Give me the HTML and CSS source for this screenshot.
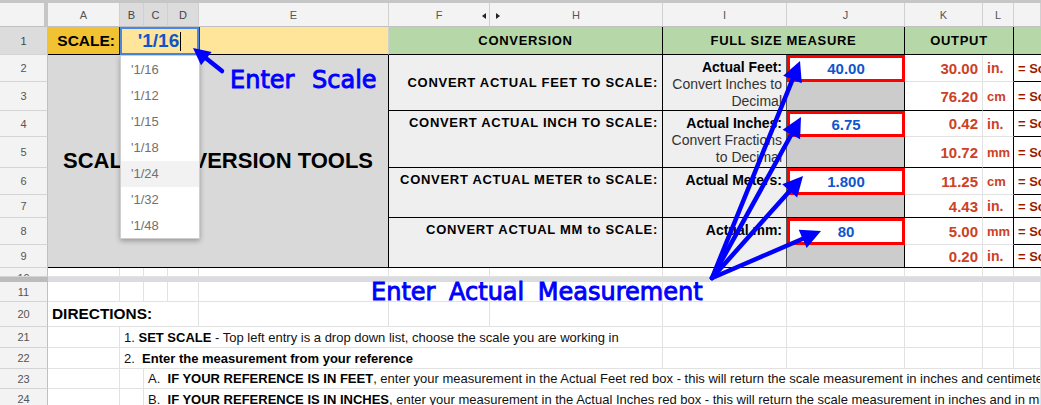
FILE: index.html
```html
<!DOCTYPE html>
<html>
<head>
<meta charset="utf-8">
<title>Scale Conversion Tools</title>
<link rel="stylesheet" href="styles.css">
</head>
<body>
<div class="page">
  <div class="topstrip"></div>
  <div class="grid frozen">
    <div class="corner"></div>
    <div class="ch">A</div>
    <div class="ch sel">B</div>
    <div class="ch sel">C</div>
    <div class="ch sel">D</div>
    <div class="ch">E</div>
    <div class="ch ch-f">F</div>
    <div class="ch ch-h">H</div>
    <div class="ch">I</div>
    <div class="ch">J</div>
    <div class="ch">K</div>
    <div class="ch">L</div>
    <div class="ch"></div>

    <div class="rh sel">1</div>
    <div class="a1">SCALE:</div>
    <div class="b1"><span>'1/16</span><span class="caret"></span></div>
    <div class="e1"></div>
    <div class="hd span2">CONVERSION</div>
    <div class="hd span2">FULL SIZE MEASURE</div>
    <div class="hd span2">OUTPUT</div>
    <div class="hd m1"></div>

    <div class="rh">2</div>
    <div class="title">SCALE CONVERSION TOOLS</div>
    <div class="conv">CONVERT ACTUAL FEET TO SCALE:</div>
    <div class="lbl"><b>Actual Feet:</b><span>Convert Inches to</span><span>Decimal</span></div>
    <div class="inp">40.00</div>
    <div class="out">30.00</div>
    <div class="unit">in.</div>
    <div class="eq">= Scale</div>

    <div class="rh">3</div>
    <div class="gray"></div>
    <div class="out grp">76.20</div>
    <div class="unit grp sm">cm</div>
    <div class="eq">= Scale</div>

    <div class="rh">4</div>
    <div class="conv top">CONVERT ACTUAL INCH TO SCALE:</div>
    <div class="lbl"><b>Actual Inches:</b><span>Convert Fractions</span><span>to Decimal</span></div>
    <div class="inp">6.75</div>
    <div class="out">0.42</div>
    <div class="unit">in.</div>
    <div class="eq">= Scale</div>

    <div class="rh">5</div>
    <div class="gray"></div>
    <div class="out grp">10.72</div>
    <div class="unit grp sm">mm</div>
    <div class="eq">= Scale</div>

    <div class="rh">6</div>
    <div class="conv top">CONVERT ACTUAL METER to SCALE:</div>
    <div class="lbl"><b>Actual Meters:</b></div>
    <div class="inp">1.800</div>
    <div class="out">11.25</div>
    <div class="unit sm">cm</div>
    <div class="eq">= Scale</div>

    <div class="rh">7</div>
    <div class="gray"></div>
    <div class="out grp">4.43</div>
    <div class="unit grp">in.</div>
    <div class="eq">= Scale</div>

    <div class="rh">8</div>
    <div class="conv top">CONVERT ACTUAL MM to SCALE:</div>
    <div class="lbl"><b>Actual mm:</b></div>
    <div class="inp">80</div>
    <div class="out">5.00</div>
    <div class="unit sm">mm</div>
    <div class="eq">= Scale</div>

    <div class="rh">9</div>
    <div class="gray"></div>
    <div class="out grp">0.20</div>
    <div class="unit grp">in.</div>
    <div class="eq">= Scale</div>

    <div class="rh clip">10</div>
    <div class="cell"></div><div class="cell"></div><div class="cell"></div><div class="cell"></div>
    <div class="cell"></div><div class="cell"></div><div class="cell"></div><div class="cell"></div>
    <div class="cell"></div><div class="cell"></div><div class="cell"></div><div class="cell"></div>
  </div>

  <div class="freeze"><div class="freeze-l"></div></div>

  <div class="grid scroll">
    <div class="rh">11</div>
    <div class="cell"></div><div class="cell"></div><div class="cell"></div><div class="cell"></div>
    <div class="cell"></div><div class="cell"></div><div class="cell"></div><div class="cell"></div>
    <div class="cell"></div><div class="cell"></div><div class="cell"></div><div class="cell"></div>

    <div class="rh">20</div>
    <div class="dir">DIRECTIONS:</div>
    <div class="cell"></div><div class="cell"></div><div class="cell"></div><div class="cell"></div>
    <div class="cell"></div><div class="cell"></div><div class="cell"></div><div class="cell"></div>

    <div class="rh">21</div>
    <div class="cell"></div>
    <div class="txt span6"><span>1. <b>SET SCALE</b> - Top left entry is a drop down list, choose the scale you are working in</span></div>
    <div class="cell"></div><div class="cell"></div><div class="cell"></div><div class="cell"></div><div class="cell"></div>

    <div class="rh">22</div>
    <div class="cell"></div>
    <div class="txt span6"><span>2.&nbsp; <b>Enter the measurement from your reference</b></span></div>
    <div class="cell"></div><div class="cell"></div><div class="cell"></div><div class="cell"></div><div class="cell"></div>

    <div class="rh">23</div>
    <div class="cell"></div><div class="cell"></div>
    <div class="txt span10"><span>A.&nbsp; <b>IF YOUR REFERENCE IS IN FEET</b>, enter your measurement in the Actual Feet red box - this will return the scale measurement in inches and centimeters</span></div>

    <div class="rh">24</div>
    <div class="cell"></div><div class="cell"></div>
    <div class="txt span10"><span>B.&nbsp; <b>IF YOUR REFERENCE IS IN INCHES</b>, enter your measurement in the Actual Inches red box - this will return the scale measurement in inches and in millimeters</span></div>
  </div>

  <div class="dropdown">
    <div class="dd-item">'1/16</div>
    <div class="dd-item">'1/12</div>
    <div class="dd-item">'1/15</div>
    <div class="dd-item">'1/18</div>
    <div class="dd-item hover">'1/24</div>
    <div class="dd-item">'1/32</div>
    <div class="dd-item">'1/48</div>
  </div>

  <div class="note note-scale">Enter Scale</div>
  <div class="note note-measure">Enter Actual Measurement</div>

  <svg class="arrows" width="1041" height="405" viewBox="0 0 1041 405">
    <g stroke="#0000ff" stroke-width="4.5" stroke-linecap="round" fill="none">
      <line x1="222" y1="71" x2="203.2" y2="56.1"/>
      <line x1="712" y1="278" x2="794" y2="75.8"/>
      <line x1="712" y1="278" x2="793.3" y2="131"/>
      <line x1="712" y1="278" x2="792.4" y2="187.9"/>
      <line x1="712" y1="278" x2="806.3" y2="237.3"/>
    </g>
    <g fill="#0000ff">
      <polygon points="193,48 211.6,51.9 201,65.2"/>
      <polygon points="800,61 801.8,83.3 783.2,75.8"/>
      <polygon points="801,117 800.1,139.3 782.6,129.7"/>
      <polygon points="803,176 797.2,197.6 782.2,184.3"/>
      <polygon points="821,231 806.6,248.1 798.7,229.7"/>
    </g>
  </svg>
</div>
</body>
</html>
```

FILE: styles.css
```css
* { box-sizing: border-box; }
html, body { margin: 0; padding: 0; }
body {
  font-family: "Liberation Sans", Arial, sans-serif;
  background: #fff;
  color: #000;
  overflow: hidden;
}
.page {
  position: relative;
  width: 1041px;
  height: 405px;
  overflow: hidden;
}
.topstrip { height: 3px; background: #c6c6c6; }

.grid {
  display: grid;
  grid-template-columns: 48px 72px 24px 24px 31px 190px 101px 173px 124px 118px 78px 31px 27px;
}
.frozen { grid-template-rows: 24px 28px 27px 29px 26px 31px 27px 23px 27px 23px 9px; }
.scroll { grid-template-rows: 20px 25px 21px 21px 20px 21px; }

.grid > div {
  display: flex;
  align-items: center;
  overflow: hidden;
  white-space: nowrap;
  min-width: 0;
}

/* headers */
.corner {
  background: #f3f3f3;
  border-right: 4px solid #c6c6c6;
  border-bottom: 1px solid #c0c0c0;
}
.ch {
  background: #f3f3f3;
  border-right: 1px solid #d0d0d0;
  border-bottom: 1px solid #c0c0c0;
  justify-content: center;
  font-size: 11px;
  color: #555;
}
.rh {
  background: #f3f3f3;
  border-right: 1px solid #c0c0c0;
  border-bottom: 1px solid #d4d4d4;
  justify-content: center;
  font-size: 11px;
  color: #555;
}
.ch.sel, .rh.sel { background: #dcdcdc; color: #444; }
.grid > .rh.clip { align-items: flex-start; padding-top: 4px; }
.grid > .ch-f, .grid > .ch-h { position: relative; overflow: visible; }
.ch-f::after {
  content: "";
  position: absolute;
  right: 3px;
  top: 10px;
  border-top: 3px solid transparent;
  border-bottom: 3px solid transparent;
  border-right: 4px solid #222;
}
.ch-h::before {
  content: "";
  position: absolute;
  left: 6px;
  top: 10px;
  border-top: 3px solid transparent;
  border-bottom: 3px solid transparent;
  border-left: 4px solid #222;
}

/* row 1 */
.grid > .a1 {
  background: #f1c232;
  border-right: 1px solid #8b0000;
  border-bottom: 1px solid #000;
  justify-content: flex-end;
  padding-right: 4px;
  font-weight: bold;
  font-size: 15.5px;
}
.grid > .b1 {
  grid-column: span 3;
  background: #ffe599;
  border: 2px solid #4a86e8;
  justify-content: center;
  color: #1155cc;
  font-weight: bold;
  font-size: 19px;
}
.caret {
  display: inline-block;
  width: 1px;
  height: 19px;
  background: #000;
  margin-left: 1px;
}
.e1 {
  background: #ffe599;
  border-left: 1px solid #cc0000;
  border-right: 1px solid #cfcfcf;
  border-bottom: 1px solid #000;
}
.grid > .hd {
  background: #b6d7a8;
  border-right: 1px solid #000;
  border-bottom: 1px solid #000;
  justify-content: center;
  font-weight: bold;
  font-size: 13px;
  letter-spacing: 0.7px;
}
.grid > .hd.m1 { border-right: 0; }
.span2 { grid-column: span 2; }
.span6 { grid-column: span 6; }
.span10 { grid-column: span 10; }

/* body of converter */
.grid > .title {
  grid-column: span 5;
  grid-row: span 8;
  background: #d9d9d9;
  border-right: 1px solid #000;
  border-bottom: 1px solid #000;
  justify-content: center;
  font-weight: bold;
  font-size: 22px;
}
.grid > .conv {
  grid-column: span 2;
  grid-row: span 2;
  background: #efefef;
  border-right: 1px solid #000;
  border-bottom: 1px solid #000;
  justify-content: flex-end;
  padding-right: 4px;
  font-weight: bold;
  font-size: 13px;
  letter-spacing: 0.7px;
  line-height: 17px;
}
.grid > .conv.top { align-items: flex-start; padding-top: 3px; }
.grid > .lbl {
  grid-row: span 2;
  background: #efefef;
  border-right: 1px solid #555;
  border-bottom: 1px solid #000;
  flex-direction: column;
  align-items: flex-end;
  justify-content: flex-start;
  padding: 4px 4px 0 0;
  font-size: 14px;
  line-height: 17px;
}
.lbl b { color: #000; }
.lbl span { color: #333; }
.grid > .inp {
  background: #fff;
  border: 3px solid #ff0000;
  justify-content: center;
  color: #1155cc;
  font-weight: bold;
  font-size: 15px;
}
.gray {
  background: #cccccc;
  border-right: 1px solid #000;
  border-bottom: 1px solid #000;
}
.grid > .out {
  background: #fff;
  border-right: 1px solid #e2e2e2;
  border-bottom: 1px solid #e2e2e2;
  justify-content: flex-end;
  padding-right: 4px;
  color: #cc4125;
  font-weight: bold;
  font-size: 15px;
}
.grid > .unit {
  background: #fff;
  border-right: 1px solid #000;
  border-bottom: 1px solid #e2e2e2;
  padding-left: 4px;
  color: #cc4125;
  font-weight: bold;
  font-size: 14px;
}
.grid > .unit.sm { font-size: 13px; }
.grid > .grp { border-bottom: 1px solid #000; }
.grid > .eq {
  background: #fff;
  border-bottom: 1px solid #000;
  padding-left: 4px;
  color: #9c1b00;
  font-weight: bold;
  font-size: 13px;
}

.cell {
  border-right: 1px solid #e2e2e2;
  border-bottom: 1px solid #e2e2e2;
}

/* freeze divider */
.freeze {
  display: flex;
  height: 5px;
  background: #dadce0;
}
.freeze-l { width: 48px; background: #bcbcbc; }

/* directions */
.grid > .dir {
  grid-column: span 4;
  border-right: 1px solid #e2e2e2;
  border-bottom: 1px solid #e2e2e2;
  padding-left: 4px;
  font-weight: bold;
  font-size: 15.4px;
}
.grid > .txt {
  border-right: 1px solid #e2e2e2;
  border-bottom: 1px solid #e2e2e2;
  padding-left: 4px;
  font-size: 13px;
  color: #111;
}
.txt b { color: #000; }

/* dropdown overlay */
.dropdown {
  position: absolute;
  left: 120px;
  top: 55px;
  width: 80px;
  height: 184px;
  background: #fff;
  border: 1px solid #cfcfcf;
  box-shadow: 0 2px 5px rgba(0, 0, 0, 0.3);
  padding-top: 1px;
}
.dd-item {
  height: 26px;
  line-height: 26px;
  padding-left: 10px;
  font-size: 13px;
  color: #707070;
}
.dd-item.hover { background: #f2f2f2; }

/* annotations */
.note {
  position: absolute;
  font-family: "Comic Sans MS", "DejaVu Sans", sans-serif;
  color: #0000ff;
  font-size: 24px;
  line-height: 24px;
  white-space: nowrap;
  -webkit-text-stroke: 0.9px #0000ff;
}
.note-scale { left: 230px; top: 68px; word-spacing: 10px; }
.note-measure { left: 371px; top: 280px; word-spacing: 6px; }

.arrows {
  position: absolute;
  left: 0;
  top: 0;
  pointer-events: none;
}
```
